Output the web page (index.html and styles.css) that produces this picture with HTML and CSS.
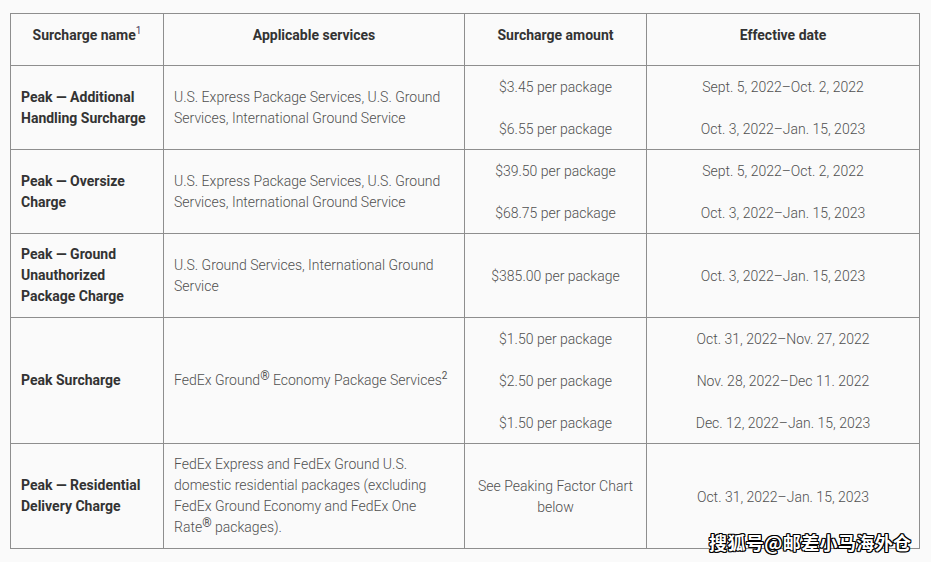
FILE: index.html
```html
<!DOCTYPE html>
<html>
<head>
<meta charset="utf-8">
<link rel="stylesheet" href="styles.css">
</head>
<body>
<div class="page">
<table class="rates">
  <colgroup>
    <col class="c1"><col class="c2"><col class="c3"><col class="c4">
  </colgroup>
  <thead>
    <tr>
      <th>Surcharge name<sup>1</sup></th>
      <th>Applicable services</th>
      <th>Surcharge amount</th>
      <th>Effective date</th>
    </tr>
  </thead>
  <tbody>
    <tr>
      <td class="name">Peak — Additional Handling Surcharge</td>
      <td class="svc">U.S. Express Package Services, U.S. Ground Services, International Ground Service</td>
      <td class="ctr"><p>$3.45 per package</p><p>$6.55 per package</p></td>
      <td class="ctr"><p>Sept. 5, 2022–Oct. 2, 2022</p><p>Oct. 3, 2022–Jan. 15, 2023</p></td>
    </tr>
    <tr>
      <td class="name">Peak — Oversize Charge</td>
      <td class="svc">U.S. Express Package Services, U.S. Ground Services, International Ground Service</td>
      <td class="ctr"><p>$39.50 per package</p><p>$68.75 per package</p></td>
      <td class="ctr"><p>Sept. 5, 2022–Oct. 2, 2022</p><p>Oct. 3, 2022–Jan. 15, 2023</p></td>
    </tr>
    <tr>
      <td class="name">Peak — Ground Unauthorized Package Charge</td>
      <td class="svc">U.S. Ground Services, International Ground Service</td>
      <td class="ctr"><p>$385.00 per package</p></td>
      <td class="ctr"><p>Oct. 3, 2022–Jan. 15, 2023</p></td>
    </tr>
    <tr>
      <td class="name">Peak Surcharge</td>
      <td class="svc">FedEx Ground<sup class="reg">®</sup> Economy Package Services<sup>2</sup></td>
      <td class="ctr"><p>$1.50 per package</p><p>$2.50 per package</p><p>$1.50 per package</p></td>
      <td class="ctr"><p>Oct. 31, 2022–Nov. 27, 2022</p><p>Nov. 28, 2022–Dec 11. 2022</p><p>Dec. 12, 2022–Jan. 15, 2023</p></td>
    </tr>
    <tr>
      <td class="name">Peak — Residential Delivery Charge</td>
      <td class="svc">FedEx Express and FedEx Ground U.S. domestic residential packages (excluding FedEx Ground Economy and FedEx One Rate<sup class="reg">®</sup> packages).</td>
      <td class="ctr"><p>See Peaking Factor Chart below</p></td>
      <td class="ctr"><p>Oct. 31, 2022–Jan. 15, 2023</p></td>
    </tr>
  </tbody>
</table>
<div class="watermark">搜狐号@邮差小马海外仓</div>
</div>
</body>
</html>
```

FILE: styles.css
```css
html, body {
  margin: 0;
  padding: 0;
  background: #fafafa;
}
body {
  font-family: Roboto, "Liberation Sans", sans-serif;
  font-size: 14px;
  line-height: 21px;
  font-weight: 300;
  color: #505050;
}
.page {
  position: relative;
  width: 931px;
  height: 562px;
  padding: 13px 0 0 10px;
  box-sizing: border-box;
}
.rates {
  border-collapse: collapse;
  table-layout: fixed;
  width: 909px;
}
.c1 { width: 153px; }
.c2 { width: 301px; }
.c3 { width: 182px; }
.c4 { width: 273px; }
.rates th, .rates td {
  border: 1px solid #8e8e8e;
  vertical-align: middle;
}
.rates th {
  padding: 11px 10px 19px;
  font-weight: 700;
  color: #333;
  text-align: center;
}
.rates td {
  padding: 10px 10px;
}
.rates td.name {
  font-weight: 700;
  color: #333;
}
.rates td.ctr {
  text-align: center;
  padding-bottom: 9px;
}
.rates td p {
  margin: 0;
  padding-top: 1px;
}
.rates td p + p {
  margin-top: 20px;
}
sup {
  font-size: 10px;
  line-height: 0;
  vertical-align: 6px;
  font-weight: 400;
}
sup.reg {
  font-size: 12px;
  vertical-align: 5px;
}
th sup {
  color: #4a3a5a;
  font-weight: 400;
}
.watermark {
  position: absolute;
  left: 709px;
  top: 530px;
  font-family: "Noto Sans CJK SC", sans-serif;
  font-weight: 700;
  font-size: 18px;
  line-height: 24px;
  color: #fff;
  letter-spacing: 0.4px;
  text-shadow: 1px 0 0 #000, -1px 0 0 #000, 0 1px 0 #000, 0 -1px 0 #000, 1px 1px 0 #000, -1px -1px 0 #000, 1px -1px 0 #000, -1px 1px 0 #000;
}
```
